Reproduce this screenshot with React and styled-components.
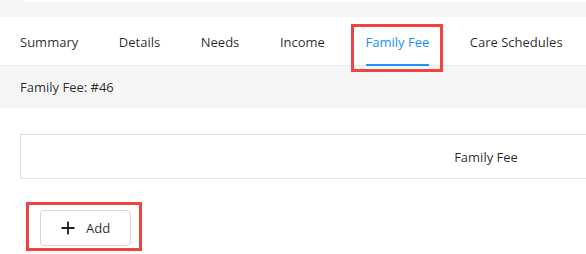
import React from "react";
import styled, { createGlobalStyle } from "styled-components";

const GlobalStyle = createGlobalStyle`
  html, body {
    margin: 0;
    padding: 0;
    background: #fff;
    overflow: hidden;
  }
  body {
    font-family: "Open Sans", "Noto Sans", sans-serif;
    font-size: 13px;
    color: rgba(0, 0, 0, 0.85);
  }
`;

const Page = styled.div`
  width: 586px;
  height: 254px;
  display: flex;
  flex-direction: column;
  overflow: hidden;
`;

const TopBand = styled.div`
  height: 17px;
  background: #f6f6f6;
  padding-left: 24px;
`;

const TopCardEdge = styled.div`
  height: 2px;
  background: #fff;
`;

const TabBar = styled.div`
  height: 48px;
  display: flex;
  align-items: stretch;
  padding-left: 20px;
  gap: 40.6px;
  border-bottom: 1px solid #e8e8e8;
  background: #fff;
  white-space: nowrap;
`;

const Tab = styled.div`
  position: relative;
  display: flex;
  align-items: center;
  padding-top: 3px;
  color: ${(p) => (p.$active ? "#1890ff" : "rgba(0, 0, 0, 0.85)")};
  border-bottom: 2px solid ${(p) => (p.$active ? "#1890ff" : "transparent")};
  margin-bottom: -1px;

  ${(p) =>
    p.$marked &&
    `
    &::after {
      content: "";
      position: absolute;
      left: -15px;
      right: -14px;
      top: 7px;
      bottom: -8px;
      border: 3px solid #ef4444;
      pointer-events: none;
    }
  `}
`;

const SubHeader = styled.div`
  height: 42px;
  background: #f6f6f6;
  display: flex;
  align-items: center;
  padding-left: 20px;
`;

const Content = styled.div`
  padding: 26px 0 0 20px;
`;

const Table = styled.div`
  width: 932px;
  height: 45px;
  box-sizing: border-box;
  border: 1px solid #e0e0e0;
  display: flex;
  align-items: center;
  justify-content: center;
  padding-top: 1px;
`;

const Marked = styled.div`
  display: inline-flex;
  margin: 23px 0 0 6px;
  border: 3px solid #ef4444;
  padding: 5px 8px 2px 11px;
`;

const Button = styled.button`
  display: flex;
  align-items: center;
  gap: 10px;
  height: 36px;
  width: 91px;
  box-sizing: border-box;
  padding: 0 0 0 19px;
  border: 1px solid #d9d9d9;
  border-radius: 4px;
  background: #fff;
  font-family: inherit;
  font-size: 13px;
  color: rgba(0, 0, 0, 0.85);
`;

const tabs = ["Summary", "Details", "Needs", "Income", "Family Fee", "Care Schedules"];

export default function App() {
  return (
    <Page>
      <GlobalStyle />
      <TopBand>
        <TopCardEdge />
      </TopBand>
      <TabBar>
        {tabs.map((t) => (
          <Tab key={t} $active={t === "Family Fee"} $marked={t === "Family Fee"}>
            {t}
          </Tab>
        ))}
      </TabBar>
      <SubHeader>Family Fee: #46</SubHeader>
      <Content>
        <Table>Family Fee</Table>
        <Marked>
          <Button>
            <svg width="16" height="16" viewBox="0 0 16 16">
              <path d="M8 1.5v13M1.5 8h13" stroke="#1f1f1f" strokeWidth="1.8" fill="none" />
            </svg>
            Add
          </Button>
        </Marked>
      </Content>
    </Page>
  );
}
